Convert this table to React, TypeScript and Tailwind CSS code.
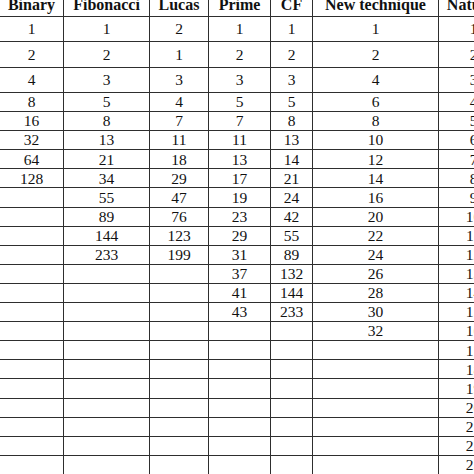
const headers = ['Binary', 'Fibonacci', 'Lucas', 'Prime', 'CF', 'New technique', 'Natural'];

// column widths include the 1px right border of each cell
const colWidths = ['w-[64px]', 'w-[86px]', 'w-[59px]', 'w-[62px]', 'w-[42px]', 'w-[126px]', 'w-[70px]'];

const columns: number[][] = [
  [1, 2, 4, 8, 16, 32, 64, 128],
  [1, 2, 3, 5, 8, 13, 21, 34, 55, 89, 144, 233],
  [2, 1, 3, 4, 7, 11, 18, 29, 47, 76, 123, 199],
  [1, 2, 3, 5, 7, 11, 13, 17, 19, 23, 29, 31, 37, 41, 43],
  [1, 2, 3, 5, 8, 13, 14, 21, 24, 42, 55, 89, 132, 144, 233],
  [1, 2, 4, 6, 8, 10, 12, 14, 16, 20, 22, 24, 26, 28, 30, 32],
  Array.from({ length: 25 }, (_, i) => i + 1),
];

const rowHeights = ['h-[25px]', 'h-[26px]', 'h-[25px]'];

const App = () => {
  const rowCount = 25;

  return (
    <div className="h-[474px] w-[474px] overflow-hidden bg-white font-['Liberation_Serif',serif] text-[#111]">
      <div className="-mt-[4px] w-max">
        <div className="flex h-[21px] border-b border-[#2e2e2e]">
          {headers.map((h, i) => (
            <div
              key={h}
              className={`${colWidths[i]} flex shrink-0 items-center justify-center border-r border-[#2e2e2e] pb-[2px] text-[16px] font-bold whitespace-nowrap`}
            >
              {h}
            </div>
          ))}
        </div>

        {Array.from({ length: rowCount }, (_, r) => (
          <div key={r} className={`flex border-b border-[#2e2e2e] ${rowHeights[r] ?? 'h-[19.1px]'}`}>
            {columns.map((col, c) => (
              <div
                key={c}
                className={`${colWidths[c]} flex shrink-0 items-center justify-center border-r border-[#2e2e2e] text-[15.5px] leading-none`}
              >
                {col[r] ?? ''}
              </div>
            ))}
          </div>
        ))}
      </div>
    </div>
  );
};

export default App;
